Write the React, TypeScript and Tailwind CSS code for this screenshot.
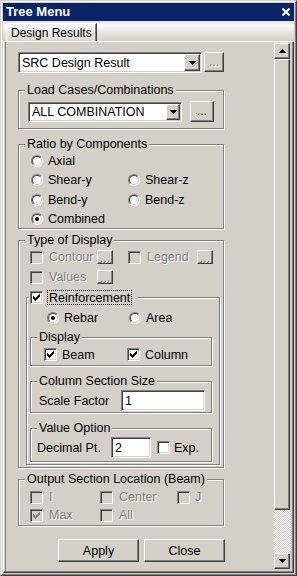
import React from 'react';

// classic 3D edges
const sunken =
  'border border-t-[#808080] border-l-[#808080] border-b-white border-r-white shadow-[inset_1px_1px_0_#404040,inset_-1px_-1px_0_#d4d0c8]';
const raised =
  'border border-t-white border-l-white border-b-[#404040] border-r-[#404040] shadow-[inset_-1px_-1px_0_#808080]';
const etched = 'border border-[#808080] shadow-[inset_1px_1px_0_#ffffff,1px_1px_0_#ffffff]';
const dim = 'text-[#808080] [text-shadow:1px_1px_0_#ffffff]';

const TICK = ['......#', '.....##', '#...###', '##.###.', '#####..', '.###...', '..#....'];

function Arrow({ up }: { up?: boolean }) {
  const rows = [7, 5, 3, 1];
  return (
    <svg width="7" height="4" viewBox="0 0 7 4" shapeRendering="crispEdges">
      {rows.map((w, i) => (
        <rect key={i} x={(7 - w) / 2} y={up ? 3 - i : i} width={w} height="1" fill="#000000" />
      ))}
    </svg>
  );
}

function Tick({ color }: { color: string }) {
  return (
    <svg width="7" height="7" viewBox="0 0 7 7" shapeRendering="crispEdges">
      {TICK.flatMap((row, y) =>
        row.split('').map((c, x) =>
          c === '#' ? <rect key={`${x}-${y}`} x={x} y={y} width="1" height="1" fill={color} /> : null
        )
      )}
    </svg>
  );
}

function Box({ checked, disabled }: { checked?: boolean; disabled?: boolean }) {
  return (
    <span
      className={`w-[13px] h-[13px] shrink-0 flex items-center justify-center ${sunken} ${
        disabled ? 'bg-[#d4d0c8]' : 'bg-white'
      }`}
    >
      {checked && <Tick color={disabled ? '#808080' : '#000000'} />}
    </span>
  );
}

function Radio({ checked }: { checked?: boolean }) {
  return (
    <span className="block w-[12px] h-[12px] shrink-0 rounded-full border border-t-[#808080] border-l-[#808080] border-b-white border-r-white">
      <span className="w-full h-full rounded-full flex items-center justify-center bg-white border border-t-[#404040] border-l-[#404040] border-b-[#d4d0c8] border-r-[#d4d0c8]">
        {checked && <span className="w-[4px] h-[4px] rounded-full bg-black" />}
      </span>
    </span>
  );
}

interface ItemProps {
  label: string;
  checked?: boolean;
  disabled?: boolean;
  className?: string;
  gap?: string;
}

function CheckItem({ label, checked, disabled, className = '', gap = 'gap-[6px]' }: ItemProps) {
  return (
    <div className={`flex items-center ${gap} ${className}`}>
      <Box checked={checked} disabled={disabled} />
      <span className={`whitespace-nowrap ${disabled ? dim : ''}`}>{label}</span>
    </div>
  );
}

function RadioItem({ label, checked, className = '' }: ItemProps) {
  return (
    <div className={`flex items-center gap-[5px] ${className}`}>
      <Radio checked={checked} />
      <span className="whitespace-nowrap">{label}</span>
    </div>
  );
}

function Group({ label, className, children }: { label: string; className: string; children: React.ReactNode }) {
  return (
    <div className={`relative ${etched} ${className}`}>
      <span className="absolute left-[6px] top-[-8px] px-[2px] bg-[#d4d0c8] leading-[14px] whitespace-nowrap">
        {label}
      </span>
      {children}
    </div>
  );
}

function Combo({ text, className, arrow }: { text: string; className: string; arrow: string }) {
  return (
    <div className={`flex shrink-0 bg-white ${sunken} ${className}`}>
      <span className="flex-1 pl-[3px] self-center whitespace-nowrap overflow-hidden">{text}</span>
      <span className={`my-[1px] mr-[1px] ${arrow} bg-[#d4d0c8] ${raised} flex items-center justify-center`}>
        <Arrow />
      </span>
    </div>
  );
}

function Dots({ className, disabled }: { className: string; disabled?: boolean }) {
  return (
    <div className={`shrink-0 bg-[#d4d0c8] ${raised} flex items-center justify-center ${className}`}>
      <span className={`leading-none ${disabled ? dim : ''}`}>...</span>
    </div>
  );
}

function SmallDots() {
  return (
    <div className={`w-[16px] h-[14px] shrink-0 bg-[#d4d0c8] ${raised} flex items-end justify-center`}>
      <span className={`leading-[10px] ${dim}`}>...</span>
    </div>
  );
}

function Edit({ value, className }: { value: string; className: string }) {
  return <div className={`shrink-0 bg-white ${sunken} flex items-center pl-[3px] ${className}`}>{value}</div>;
}

function Button({ label }: { label: string }) {
  return (
    <div className={`w-[81px] h-[23px] bg-[#d4d0c8] ${raised} flex items-center justify-center`}>{label}</div>
  );
}

function Scrollbar() {
  return (
    <div className="mt-[1px] mr-[3px] w-[16px] h-[526px] shrink-0 flex flex-col">
      <div className={`h-[16px] shrink-0 bg-[#d4d0c8] ${raised} flex items-center justify-center`}>
        <Arrow up />
      </div>
      <div className={`h-[451px] shrink-0 bg-[#d4d0c8] ${raised}`} />
      <div className="flex-1 [background:repeating-conic-gradient(#ffffff_0%_25%,#d4d0c8_0%_50%)_0_0/2px_2px]" />
      <div className={`h-[16px] shrink-0 bg-[#d4d0c8] ${raised} flex items-center justify-center`}>
        <Arrow />
      </div>
    </div>
  );
}

export default function App() {
  return (
    <div className="w-[297px] h-[576px] flex flex-col p-[2px] bg-[#d4d0c8] border border-t-[#d4d0c8] border-l-[#d4d0c8] border-b-[#404040] border-r-[#404040] shadow-[inset_1px_1px_0_#ffffff,inset_-1px_-1px_0_#808080] font-['Liberation_Sans',Arial,sans-serif] text-[12.5px] leading-[14px] text-black overflow-hidden select-none">
      {/* Title bar */}
      <div className="h-[18px] shrink-0 flex items-center justify-between pl-[3px] pr-[4px] bg-[#0a246a]">
        <span className="text-white font-bold text-[13px]">Tree Menu</span>
        <svg width="8" height="8" viewBox="0 0 8 8">
          <path d="M0.5 0.5 L7.5 7.5 M7.5 0.5 L0.5 7.5" stroke="#ffffff" strokeWidth="2" />
        </svg>
      </div>

      {/* Tab strip */}
      <div className="h-[20px] shrink-0 flex items-end pl-[3px] bg-linear-to-b from-[#e2e0da] via-[#fafaf9] via-20% to-[#d4d0c8]">
        <div className="w-[91px] h-[18px] flex items-center pl-[4px] border-t border-l border-r border-t-white border-l-white border-r-[#404040] shadow-[inset_-1px_0_0_#808080] bg-linear-to-b from-[#fdfdfd] to-[#dad7d0] text-[12px] whitespace-nowrap">
          Design Results
        </div>
      </div>

      {/* Tab page */}
      <div className="flex-1 flex border border-t-white border-l-white border-b-[#404040] border-r-[#404040] shadow-[inset_-1px_-1px_0_#808080]">
        <div className="flex-1 ml-[1px] border-l border-l-[#808080] pl-[12px] pt-[10px]">
          <div className="w-[206px] flex flex-col">
            <div className="flex h-[21px]">
              <Combo text="SRC Design Result" className="w-[184px] h-[21px]" arrow="w-[16px]" />
              <Dots disabled className="ml-[2px] w-[20px] h-[20px]" />
            </div>

            <Group label="Load Cases/Combinations" className="mt-[17px] h-[39px] pl-[9px] pt-[11px]">
              <div className="flex items-start">
                <Combo text="ALL COMBINATION" className="w-[154px] h-[20px]" arrow="w-[14px]" />
                <Dots className="ml-[8px] -mt-[1px] w-[24px] h-[21px]" />
              </div>
            </Group>

            <Group label="Ratio by Components" className="mt-[15px] h-[85px] pl-[12px] pt-[6px]">
              <div className="h-[19.5px] flex items-center">
                <RadioItem label="Axial" />
              </div>
              <div className="h-[19.5px] flex items-center">
                <RadioItem label="Shear-y" className="w-[97px]" />
                <RadioItem label="Shear-z" />
              </div>
              <div className="h-[19.5px] flex items-center">
                <RadioItem label="Bend-y" className="w-[97px]" />
                <RadioItem label="Bend-z" />
              </div>
              <div className="h-[19.5px] flex items-center">
                <RadioItem label="Combined" checked />
              </div>
            </Group>

            <Group label="Type of Display" className="mt-[11px] h-[228px] pl-[7px] pr-[3px] pt-[6px]">
              <div className="h-[20px] flex items-center pl-[4px]">
                <CheckItem disabled label="Contour" className="w-[67px]" />
                <SmallDots />
                <CheckItem disabled label="Legend" className="ml-[15px] w-[69px]" />
                <SmallDots />
              </div>
              <div className="h-[20px] flex items-center pl-[4px]">
                <CheckItem disabled label="Values" className="w-[67px]" />
                <SmallDots />
              </div>

              {/* Reinforcement */}
              <div className={`relative mt-[10px] h-[168px] ${etched} pl-[3px] pr-[7px] pt-[10px]`}>
                <div className="absolute left-[2px] top-[-8px] h-[15px] flex items-center gap-[4px] pl-[1px] pr-[6px] bg-[#d4d0c8]">
                  <Box checked />
                  <span className="h-[15px] px-[1px] flex items-center border border-dotted border-black whitespace-nowrap">
                    Reinforcement
                  </span>
                </div>

                <div className="h-[20px] flex items-center pl-[17px]">
                  <RadioItem checked label="Rebar" className="w-[82px]" />
                  <RadioItem label="Area" />
                </div>

                <Group label="Display" className="mt-[9px] h-[29px] pl-[13px] pt-[10px]">
                  <div className="h-[13px] flex items-center">
                    <CheckItem checked label="Beam" gap="gap-[5px]" className="w-[83px]" />
                    <CheckItem checked label="Column" gap="gap-[5px]" />
                  </div>
                </Group>

                <Group label="Column Section Size" className="mt-[15px] h-[32px] pl-[8px] pt-[8px]">
                  <div className="flex items-center">
                    <span className="w-[82px] whitespace-nowrap">Scale Factor</span>
                    <Edit value="1" className="w-[84px] h-[21px]" />
                  </div>
                </Group>

                <Group label="Value Option" className="mt-[15px] h-[34px] pl-[6px] pt-[8px]">
                  <div className="flex items-center">
                    <span className="w-[74px] whitespace-nowrap">Decimal Pt.</span>
                    <Edit value="2" className="w-[40px] h-[21px]" />
                    <CheckItem label="Exp." gap="gap-[4px]" className="ml-[6px]" />
                  </div>
                </Group>
              </div>
            </Group>

            <Group label="Output Section Location (Beam)" className="mt-[11px] h-[47px] pl-[11px] pt-[8px]">
              <div className="h-[18px] flex items-center">
                <CheckItem disabled label="I" className="w-[70px]" />
                <CheckItem disabled label="Center" className="w-[77px]" />
                <CheckItem disabled label="J" gap="gap-[5px]" />
              </div>
              <div className="h-[18px] flex items-center">
                <CheckItem disabled checked label="Max" className="w-[70px]" />
                <CheckItem disabled label="All" />
              </div>
            </Group>

            <div className="mt-[13px] w-[207px] flex justify-end gap-[5px]">
              <Button label="Apply" />
              <Button label="Close" />
            </div>
          </div>
        </div>
        <Scrollbar />
      </div>
    </div>
  );
}
